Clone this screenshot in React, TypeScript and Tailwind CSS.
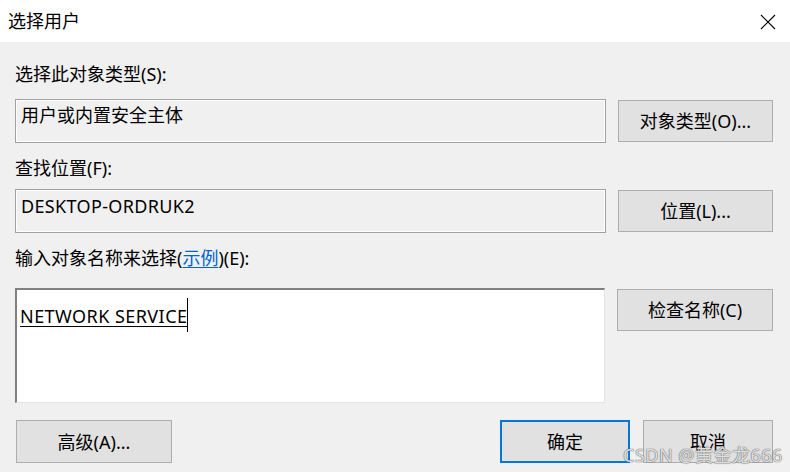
import React from 'react'

const FONT = "font-['Noto_Sans','Noto_Sans_CJK_SC',sans-serif]"

function Btn({ children, w, primary = false, className = '' }: { children: React.ReactNode; w: string; primary?: boolean; className?: string }) {
  return (
    <div
      className={`${w} h-[43px] flex items-center justify-center bg-[#e1e1e1] text-[18px] leading-[24px] text-black ${
        primary ? 'border-2 border-[#0078d7]' : 'border border-[#adadad]'
      } ${className}`}
    >
      {children}
    </div>
  )
}

export default function App() {
  return (
    <div className={`relative w-[790px] h-[472px] bg-[#f0f0f0] overflow-hidden ${FONT}`}>
      {/* Title bar */}
      <div className="h-[42px] bg-white flex items-center justify-between pl-[8px] pr-[14px]">
        <span className="text-[18px] leading-[24px] text-black">选择用户</span>
        <svg width="16" height="16" viewBox="0 0 16 16" className="mt-[1px]">
          <path d="M1 1 L15 15 M15 1 L1 15" stroke="#000" strokeWidth="1.1" fill="none" />
        </svg>
      </div>

      {/* Body */}
      <div className="pl-[15px] pr-[17px] text-black text-[18px] leading-[24px]">
        <div className="mt-[20px]">选择此对象类型(S):</div>

        <div className="mt-[13px] flex gap-[12px]">
          <div className="w-[591px] h-[44px] border border-[#a0a0a0] shadow-[inset_0_0_0_1px_#ffffff] pl-[5px] pt-[3px]">
            用户或内置安全主体
          </div>
          <Btn w="w-[155px]" className="mt-[1px] !h-[42px]">对象类型(O)...</Btn>
        </div>

        <div className="mt-[13px]">查找位置(F):</div>

        <div className="mt-[9px] flex gap-[12px]">
          <div className="w-[591px] h-[44px] border border-[#a0a0a0] shadow-[inset_0_0_0_1px_#ffffff] pl-[5px] pt-[4px] tracking-[0.35px]">
            DESKTOP-ORDRUK2
          </div>
          <Btn w="w-[155px]" className="mt-[1px] !h-[42px]">位置(L)...</Btn>
        </div>

        <div className="mt-[13px]">
          输入对象名称来选择(<span className="text-[#0066cc] underline underline-offset-2">示例</span>)(E):
        </div>

        <div className="mt-[18px] flex gap-[12px]">
          <div className="w-[590px] h-[115px] bg-white border-t-2 border-l-2 border-t-[#808080] border-l-[#808080] border-r border-b border-r-[#e3e3e3] border-b-[#e3e3e3] pl-[3px] pt-[14px]">
            <span className="underline underline-offset-[3px] tracking-[0.45px]">NETWORK SERVICE</span>
            <span className="inline-block w-[1px] h-[34px] bg-black align-middle -mt-[6px]" />
          </div>
          <Btn w="w-[156px]" className="mt-[1px] !h-[42px]">检查名称(C)</Btn>
        </div>

        <div className="mt-[17px] flex items-start">
          <Btn w="w-[156px]" className="ml-[1px]">高级(A)...</Btn>
          <div className="flex-1" />
          <Btn w="w-[130px]" primary>确定</Btn>
          <Btn w="w-[130px]" className="ml-[13px]">取消</Btn>
        </div>
      </div>

      {/* Watermark overlay */}
      <div className="absolute left-[623px] top-[443px] text-[18px] leading-[24px] text-white/80 [text-shadow:0_0_1px_#555,0_0_1px_#555] tracking-[0.5px]">
        CSDN @黄金龙666
      </div>
    </div>
  )
}
